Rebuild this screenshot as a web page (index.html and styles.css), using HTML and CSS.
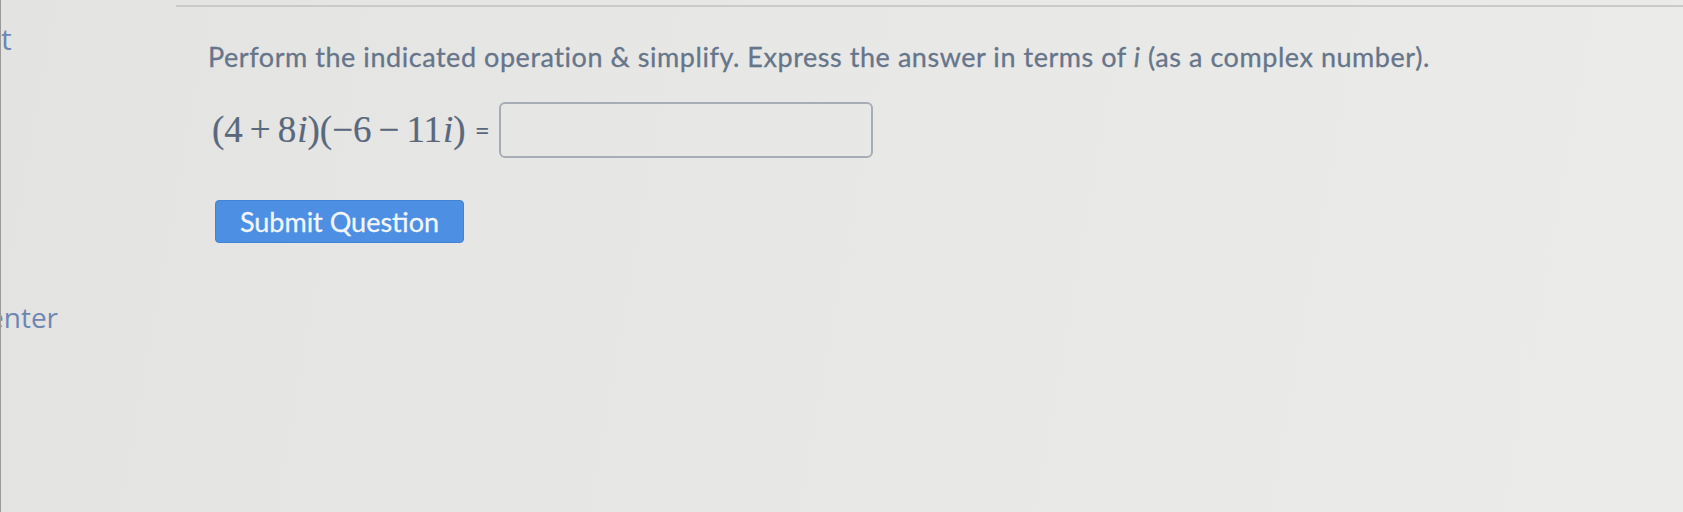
FILE: index.html
```html
<!DOCTYPE html>
<html lang="en">
<head>
<meta charset="utf-8">
<title>Question</title>
<link rel="stylesheet" href="styles.css">
</head>
<body>
<div class="page">
  <aside class="side">
    <div class="side-t">t</div>
    <div class="side-enter">enter</div>
  </aside>
  <main class="main">
    <p class="prompt">Perform the indicated operation &amp; simplify. Express the answer in terms of <em>i</em> (as a complex number).</p>
    <div class="eq-row">
      <span class="math"><span class="mp">(</span>4<span class="mo">+</span>8<span class="mi">i</span><span class="mp">)</span><span class="mp">(</span>−6<span class="mo">−</span>11<span class="mi">i</span><span class="mp">)</span></span>
      <span class="eq">=</span>
      <input class="answer" type="text" aria-label="answer">
    </div>
    <button class="submit" type="button">Submit Question</button>
  </main>
</div>
</body>
</html>
```
FILE: styles.css
```css
html, body {
  margin: 0;
  padding: 0;
  height: 100%;
}
body {
  background: linear-gradient(100deg, #e3e3e1 0%, #e7e7e5 40%, #ebebe9 100%);
  font-family: Lato, "Open Sans", sans-serif;
  overflow: hidden;
}
.page {
  display: flex;
  height: 512px;
  border-left: 1px solid #9a9a9a;
}
.side {
  width: 175px;
  flex: none;
  overflow: hidden;
  color: #6f86b5;
}
.side-t {
  font-family: "Open Sans", sans-serif;
  font-size: 30px;
  line-height: 30px;
  margin-top: 24px;
}
.side-enter {
  font-family: "Open Sans", sans-serif;
  font-size: 28px;
  line-height: 32px;
  margin-top: 247px;
  margin-left: -13px;
}
.main {
  flex: 1;
  margin-top: 5px;
  border-top: 2px solid #cacaca;
  padding-left: 32px;
}
.prompt {
  margin: 34px 0 0;
  font-size: 27px;
  line-height: 32px;
  letter-spacing: 0.55px;
  color: #66758a;
  white-space: nowrap;
  -webkit-text-stroke: 0.3px #66758a;
}
.prompt em {
  font-style: italic;
}
.eq-row {
  display: flex;
  align-items: center;
  margin-top: 29px;
  color: #5a687d;
}
.math {
  font-family: "Liberation Serif", "DejaVu Serif", serif;
  font-size: 37px;
  line-height: 42px;
  padding-left: 4px;
  -webkit-text-stroke: 0.2px #5a687d;
}
.mo {
  margin: 0 7px;
}
.mi {
  font-style: italic;
  margin-left: 1px;
}
.eq {
  font-size: 26px;
  margin: 0 9px 0 9px;
}
.answer {
  width: 374px;
  height: 56px;
  box-sizing: border-box;
  border: 2px solid #a7adb5;
  border-radius: 6px;
  background: transparent;
  margin: 0;
  padding: 0 10px;
  font: inherit;
}
.submit {
  display: block;
  margin: 42px 0 0 7px;
  width: 249px;
  height: 43px;
  padding: 0;
  border: 1px solid #4283d4;
  border-radius: 4px;
  background: #4d8fe2;
  color: #f2f6fc;
  font-family: Lato, "Open Sans", sans-serif;
  font-size: 27px;
  line-height: 41px;
  text-align: center;
  -webkit-text-stroke: 0.3px #f2f6fc;
}
```
